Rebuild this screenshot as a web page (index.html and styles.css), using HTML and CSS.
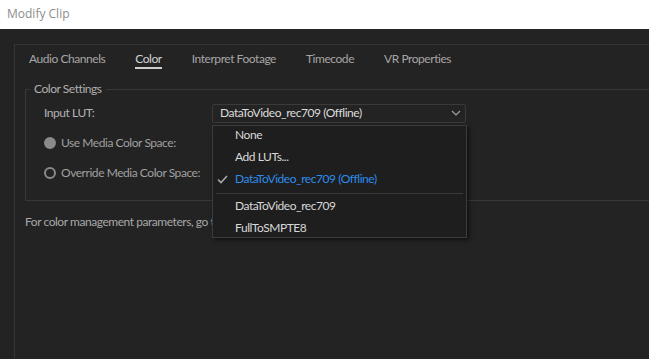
FILE: index.html
```html
<!DOCTYPE html>
<html>
<head>
<meta charset="utf-8">
<link rel="stylesheet" href="styles.css">
</head>
<body>
<div class="titlebar">Modify Clip</div>
<div class="dialog">
  <div class="panel">
    <div class="tabs">
      <span class="tab">Audio Channels</span>
      <span class="tab active">Color</span>
      <span class="tab">Interpret Footage</span>
      <span class="tab">Timecode</span>
      <span class="tab">VR Properties</span>
    </div>
    <fieldset class="group">
      <legend>Color Settings</legend>
      <div class="grid">
        <div class="label">Input LUT:</div>
        <div class="select-wrap">
          <div class="select">
            <span>DataToVideo_rec709 (Offline)</span>
            <svg class="chev" width="10" height="6" viewBox="0 0 10 6"><polyline points="1,1 5,5 9,1" fill="none" stroke="#a0a0a0" stroke-width="1.2"/></svg>
          </div>
          <div class="menu">
            <div class="item">None</div>
            <div class="item">Add LUTs...</div>
            <div class="item selected">
              <svg class="check" width="11" height="9" viewBox="0 0 11 9"><polyline points="1,4.5 4,7.5 10,1" fill="none" stroke="#a8a8a8" stroke-width="1.6"/></svg>
              DataToVideo_rec709 (Offline)
            </div>
            <div class="sep"></div>
            <div class="item">DataToVideo_rec709</div>
            <div class="item last">FullToSMPTE8</div>
          </div>
        </div>
        <div class="label radio"><span class="dot filled"></span>Use Media Color Space:</div>
        <div></div>
        <div class="label radio"><span class="dot"></span>Override Media Color Space:</div>
        <div></div>
      </div>
    </fieldset>
    <p class="note">For color management parameters, go to Project Settings.</p>
  </div>
</div>
</body>
</html>
```

FILE: styles.css
```css
html, body {
  margin: 0;
  padding: 0;
}
body {
  width: 649px;
  height: 359px;
  overflow: hidden;
  background: #232323;
  font-family: "Lato", "Open Sans", sans-serif;
  font-size: 12px;
  letter-spacing: -0.45px;
  color: #b4b4b4;
}
.titlebar {
  height: 29px;
  line-height: 28px;
  background: #ffffff;
  color: #8c8c8c;
  padding-left: 7px;
  font-family: "Open Sans", sans-serif;
  font-size: 12px;
  letter-spacing: 0;
}
.dialog {
  padding: 15px 0 0 14px;
}
.panel {
  width: 760px;
  height: 400px;
  border-top: 1px solid #353535;
  border-left: 1px solid #353535;
}
.tabs {
  display: flex;
  gap: 30px;
  padding-left: 14px;
}
.tab {
  padding-top: 6px;
  line-height: 16px;
  border-bottom: 2px solid transparent;
  color: #a6a6a6;
  white-space: nowrap;
}
.tab.active {
  color: #d4d4d4;
  border-bottom-color: #cfcfcf;
}
.group {
  margin: 12px 0 0 10px;
  padding: 0;
  border: 1px solid #383838;
  width: 720px;
  box-sizing: border-box;
}
.group legend {
  margin-left: 4px;
  padding: 0 4px;
  line-height: 16px;
  color: #b0b0b0;
}
.grid {
  display: grid;
  grid-template-columns: 168px 254px;
  grid-auto-rows: 20px;
  row-gap: 10px;
  padding: 6px 0 17px 18px;
  align-items: center;
}
.label {
  line-height: 20px;
  color: #b4b4b4;
  white-space: nowrap;
}
.label.radio {
  display: flex;
  align-items: center;
  gap: 5px;
  color: #a0a0a0;
}
.dot {
  flex: none;
  width: 12px;
  height: 12px;
  border-radius: 50%;
  box-sizing: border-box;
  border: 2px solid #8a8a8a;
}
.dot.filled {
  background: #8a8a8a;
}
.select-wrap {
  position: relative;
}
.select {
  height: 19px;
  box-sizing: border-box;
  border: 1px solid #3a3a3a;
  border-radius: 2px;
  display: flex;
  align-items: center;
  justify-content: space-between;
  padding: 0 4px 0 7px;
  color: #dcdcdc;
  line-height: 16px;
  white-space: nowrap;
}
.chev {
  display: block;
}
.menu {
  position: absolute;
  left: 0;
  top: 21px;
  width: 255px;
  box-sizing: border-box;
  background: #1e1e1e;
  border: 1px solid #3c3c3c;
  box-shadow: 2px 2px 4px rgba(0, 0, 0, 0.55);
  display: flex;
  flex-direction: column;
  gap: 4px;
  padding-bottom: 0;
  z-index: 2;
}
.item {
  position: relative;
  line-height: 18px;
  padding-left: 22px;
  color: #d8d8d8;
  white-space: nowrap;
}
.item.selected {
  color: #2d8ceb;
}
.check {
  position: absolute;
  left: 4px;
  top: 5px;
}
.sep {
  height: 1px;
  background: #3a3a3a;
  margin: 1px 3px -1px 3px;
}
.note {
  margin: 13px 0 0 10px;
  line-height: 16px;
  color: #a8a8a8;
  white-space: nowrap;
}
```
